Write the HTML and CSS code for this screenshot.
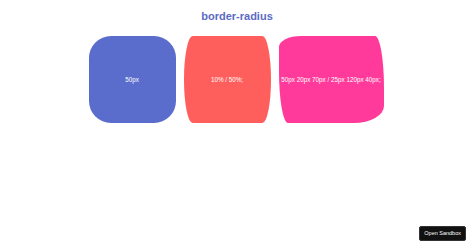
FILE: index.html
```html
<!DOCTYPE html>
<html>
<head>
<meta charset="utf-8">
<link rel="stylesheet" href="styles.css">
</head>
<body>
<main class="page">
  <h1 class="title">border-radius</h1>
  <div class="row">
    <div class="box box-blue">50px</div>
    <div class="box box-red">10% / 50%;</div>
    <div class="box box-pink">50px 20px 70px / 25px 120px 40px;</div>
  </div>
</main>
<a class="sandbox">Open Sandbox</a>
</body>
</html>
```
FILE: styles.css
```css
html, body {
  margin: 0;
  padding: 0;
  background: #ffffff;
  width: 474px;
  height: 248px;
  overflow: hidden;
  font-family: "Liberation Sans", Arial, sans-serif;
}
.page {
  display: flex;
  flex-direction: column;
  align-items: center;
  padding-top: 9px;
}
.title {
  margin: 0;
  font-size: 11px;
  line-height: 14px;
  font-weight: bold;
  color: #5a6bc4;
}
.row {
  display: flex;
  gap: 8px;
  margin-top: 13px;
  margin-left: -2px;
}
.box {
  height: 87px;
  width: 87px;
  display: flex;
  align-items: center;
  justify-content: center;
  color: #fff;
  font-size: 6.3px;
}
.box-blue {
  background: #5a6dcc;
  border-radius: 22px;
}
.box-red {
  background: #ff5f5c;
  border-radius: 10% / 50%;
}
.box-pink {
  width: 105px;
  background: #ff3a9a;
  border-radius: 22px 9px 30px / 11px 52px 17px;
}
.sandbox {
  position: absolute;
  right: 8px;
  bottom: 7px;
  background: #111;
  color: #fff;
  font-size: 5.5px;
  padding: 0 4px;
  height: 13px;
  line-height: 13px;
  border-radius: 2px;
  border: 1px solid #333;
}
```
